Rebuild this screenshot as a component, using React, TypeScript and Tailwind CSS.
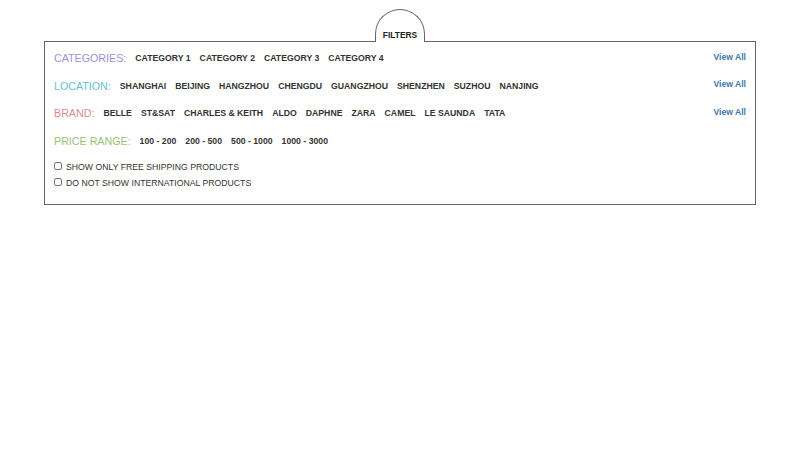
import React from "react";

const rows = [
  { label: "CATEGORIES:", color: "text-[#9a94d8]", items: ["CATEGORY 1", "CATEGORY 2", "CATEGORY 3", "CATEGORY 4"], viewAll: true },
  { label: "LOCATION:", color: "text-[#66c4c9]", items: ["SHANGHAI", "BEIJING", "HANGZHOU", "CHENGDU", "GUANGZHOU", "SHENZHEN", "SUZHOU", "NANJING"], viewAll: true },
  { label: "BRAND:", color: "text-[#df8a90]", items: ["BELLE", "ST&SAT", "CHARLES & KEITH", "ALDO", "DAPHNE", "ZARA", "CAMEL", "LE SAUNDA", "TATA"], viewAll: true },
  { label: "PRICE RANGE:", color: "text-[#95c676]", items: ["100 - 200", "200 - 500", "500 - 1000", "1000 - 3000"], viewAll: false },
];

export default function App() {
  return (
    <div className="w-[800px] h-[450px] bg-white pt-[9px] px-[44px] font-['Liberation_Sans',Arial,sans-serif] text-[#333]">
      <div className="flex justify-center">
        <div className="relative z-10 -mb-px w-[50px] h-[33px] border border-b-0 border-[#666] rounded-t-[25px] bg-white flex items-end justify-center pb-[1px]">
          <span className="text-[8.4px] font-bold leading-[12px] text-[#222]">FILTERS</span>
        </div>
      </div>
      <div className="border border-[#666] h-[164px] pt-[3px] px-[9px]">
        {rows.map((r) => (
          <div key={r.label} className="h-[27.5px] flex items-center justify-between">
            <div className="flex items-center gap-[9px]">
              <span className={`text-[10.7px] leading-none ${r.color}`}>{r.label}</span>
              {r.items.map((it) => (
                <span key={it} className="text-[8.7px] font-bold leading-none text-[#333]">{it}</span>
              ))}
            </div>
            {r.viewAll && (
              <span className="text-[8.6px] font-bold leading-none text-[#3d78ad] mb-[3px]">View All</span>
            )}
          </div>
        ))}
        <div className="mt-[4px] flex flex-col">
          {["SHOW ONLY FREE SHIPPING PRODUCTS", "DO NOT SHOW INTERNATIONAL PRODUCTS"].map((t) => (
            <label key={t} className="h-4 flex items-center gap-[4px]">
              <input type="checkbox" className="appearance-none w-[8px] h-[8px] border border-[#777] rounded-[2px] bg-white mb-[2px]" />
              <span className="text-[8.7px] leading-none text-[#333]">{t}</span>
            </label>
          ))}
        </div>
      </div>
    </div>
  );
}
